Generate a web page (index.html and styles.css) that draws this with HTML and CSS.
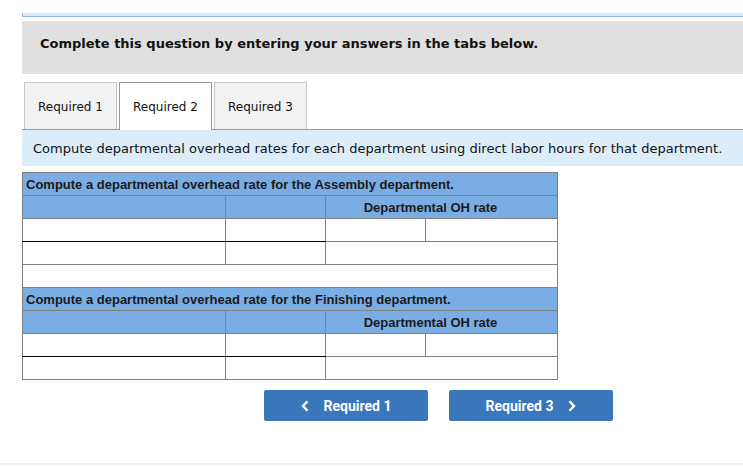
FILE: index.html
```html
<!DOCTYPE html>
<html>
<head>
<meta charset="utf-8">
<link rel="stylesheet" href="styles.css">
</head>
<body>
<div class="content">
  <div class="topbox"></div>
  <div class="header">Complete this question by entering your answers in the tabs below.</div>
  <div class="tabs">
    <div class="tab">Required 1</div>
    <div class="tab active">Required 2</div>
    <div class="tab">Required 3</div>
  </div>
  <div class="instr">Compute departmental overhead rates for each department using direct labor hours for that department.</div>
  <table class="grid">
    <colgroup>
      <col class="c1"><col class="c2"><col class="c3"><col class="c4">
    </colgroup>
    <tr><td class="title" colspan="4">Compute a departmental overhead rate for the Assembly department.</td></tr>
    <tr><td class="hd"></td><td class="hd"></td><td class="hd center" colspan="2">Departmental OH rate</td></tr>
    <tr><td class="dark"></td><td class="dark"></td><td></td><td></td></tr>
    <tr><td></td><td></td><td colspan="2"></td></tr>
    <tr><td colspan="4"></td></tr>
    <tr><td class="title" colspan="4">Compute a departmental overhead rate for the Finishing department.</td></tr>
    <tr><td class="hd"></td><td class="hd"></td><td class="hd center" colspan="2">Departmental OH rate</td></tr>
    <tr><td class="dark"></td><td class="dark"></td><td></td><td></td></tr>
    <tr><td></td><td></td><td colspan="2"></td></tr>
  </table>
  <div class="nav">
    <div class="btn">
      <svg class="chev" width="8" height="12" viewBox="0 0 8 12"><path d="M6.5 1.2 L2 6 L6.5 10.8" fill="none" stroke="#ffffff" stroke-width="2.4"/></svg>
      <span>Required 1</span>
    </div>
    <div class="btn">
      <span>Required 3</span>
      <svg class="chev" width="8" height="12" viewBox="0 0 8 12"><path d="M1.5 1.2 L6 6 L1.5 10.8" fill="none" stroke="#ffffff" stroke-width="2.4"/></svg>
    </div>
  </div>
</div>
<div class="footline"></div>
</body>
</html>
```
FILE: styles.css
```css
html, body {
  margin: 0;
  padding: 0;
  background: #ffffff;
}
body {
  font-family: "DejaVu Sans", Verdana, sans-serif;
  color: #000;
}
.content {
  margin-left: 22px;
  padding-top: 13px;
}
.topbox {
  height: 3px;
  background: #dcecfa;
  border-left: 1px solid #8fb4de;
  border-bottom: 1px solid #8fb4de;
}
.header {
  margin-top: 4px;
  height: 53px;
  box-sizing: border-box;
  background: #e0e0e0;
  padding: 14px 0 0 18px;
  font-size: 13px;
  font-weight: bold;
  line-height: 18px;
  color: #111;
}
.tabs {
  margin-top: 8px;
  display: flex;
  gap: 2px;
  padding-left: 2px;
  border-bottom: 1px solid #9a9a9a;
  height: 47px;
}
.tab {
  width: 93px;
  height: 47px;
  box-sizing: border-box;
  background: #f2f2f2;
  border: 1px solid #c6c6c6;
  border-bottom: none;
  font-size: 12px;
  color: #111;
  display: flex;
  align-items: center;
  justify-content: center;
  padding-top: 1px;
}
.tab.active {
  background: #ffffff;
  border-color: #9a9a9a;
  height: 48px;
}
.instr {
  height: 36px;
  box-sizing: border-box;
  background: #dbedf9;
  padding: 10px 0 0 11px;
  font-size: 13px;
  line-height: 18px;
  color: #111;
}
.grid {
  margin-top: 6px;
  border-collapse: collapse;
  width: 535px;
  table-layout: fixed;
  font-family: "Liberation Sans", Arial, sans-serif;
  font-size: 13px;
}
.c1 { width: 203px; }
.c2 { width: 100px; }
.c3 { width: 100px; }
.c4 { width: 132px; }
.grid td {
  border: 1px solid #808080;
  height: 23px;
  padding: 0;
  box-sizing: border-box;
}
.grid td.title {
  background: #7aade4;
  font-weight: bold;
  color: #1a1a1a;
  padding-left: 3px;
}
.grid td.hd {
  background: #7aade4;
  font-weight: bold;
  color: #1a1a1a;
}
.grid td.center {
  text-align: center;
  padding-right: 22px;
}
.grid td.dark {
  border-bottom: 1px solid #000000;
}
.nav {
  margin-top: 10px;
  margin-left: 242px;
  display: flex;
  gap: 21px;
}
.btn {
  width: 164px;
  height: 31px;
  background: #3a76ba;
  border-radius: 2px;
  display: flex;
  align-items: center;
  justify-content: center;
  gap: 15px;
  font-family: Roboto, "Liberation Sans", sans-serif;
  font-weight: bold;
  font-size: 14px;
  color: #ffffff;
}
.chev {
  display: block;
}
.footline {
  margin-top: 42px;
  height: 2px;
  background: #f0f0f0;
}
```
